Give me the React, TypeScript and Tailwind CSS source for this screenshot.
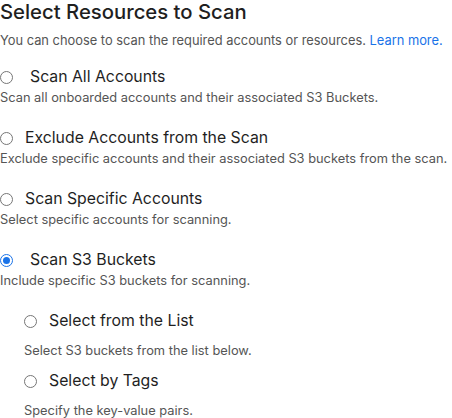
import React from "react";

function Radio({ checked }: { checked?: boolean }) {
  return (
    <span
      className={
        "inline-flex h-[13px] w-[13px] shrink-0 items-center justify-center rounded-full border " +
        (checked ? "border-[#1a73e8]" : "border-[#767676]")
      }
    >
      {checked ? <span className="h-[7px] w-[7px] rounded-full bg-[#1a73e8]" /> : null}
    </span>
  );
}

function Option({
  label,
  desc,
  gap,
  checked,
}: {
  label: string;
  desc: string;
  gap: string;
  checked?: boolean;
}) {
  return (
    <div className="flex flex-col">
      <div className={"flex h-[20px] items-center " + gap}>
        <Radio checked={checked} />
        <span className="text-[15.8px] leading-[20px] text-[#1f1f1f]">{label}</span>
      </div>
      <div className="mt-[1px] whitespace-nowrap text-[12.85px] leading-[20px] text-[#555]">{desc}</div>
    </div>
  );
}

export default function App() {
  return (
    <div className="h-[418px] w-[452px] overflow-hidden bg-white font-['Inter',sans-serif]">
      <div className="mt-[-2px] text-[20.3px] leading-[28px] font-medium text-[#1f1f1f]">Select Resources to Scan</div>
      <div className="mt-[5px] whitespace-nowrap text-[12.87px] leading-[20px] text-[#555]">
        You can choose to scan the required accounts or resources.{" "}
        <span className="text-[#1a73e8]">Learn more.</span>
      </div>
      <div className="mt-[16px] flex flex-col gap-[20px]">
        <Option label="Scan All Accounts" desc="Scan all onboarded accounts and their associated S3 Buckets." gap="gap-[17px]" />
        <Option label="Exclude Accounts from the Scan" desc="Exclude specific accounts and their associated S3 buckets from the scan." gap="gap-[12px]" />
        <Option label="Scan Specific Accounts" desc="Select specific accounts for scanning." gap="gap-[12px]" />
        <Option label="Scan S3 Buckets" desc="Include specific S3 buckets for scanning." gap="gap-[17px]" checked />
      </div>
      <div className="ml-[24px] mt-[20px] flex flex-col">
        <div className="flex h-[20px] items-center gap-[12px]">
          <Radio />
          <span className="text-[15.8px] leading-[20px] text-[#1f1f1f]">Select from the List</span>
        </div>
        <div className="mt-[10px] whitespace-nowrap text-[12.85px] leading-[20px] text-[#555]">Select S3 buckets from the list below.</div>
        <div className="mt-[10px] flex h-[20px] items-center gap-[12px]">
          <Radio />
          <span className="text-[15.8px] leading-[20px] text-[#1f1f1f]">Select by Tags</span>
        </div>
        <div className="mt-[10px] whitespace-nowrap text-[12.85px] leading-[20px] text-[#555]">Specify the key-value pairs.</div>
      </div>
    </div>
  );
}
